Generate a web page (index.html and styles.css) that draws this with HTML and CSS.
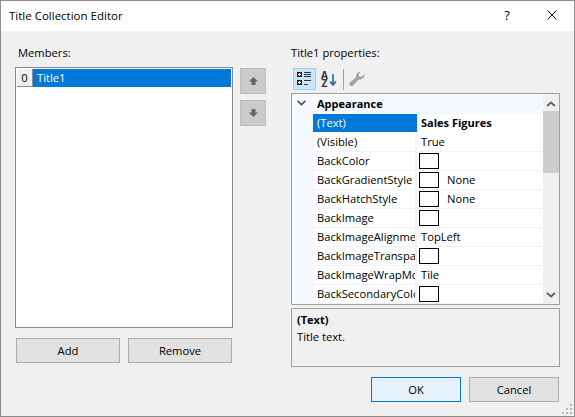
FILE: index.html
```html
<!DOCTYPE html>
<html lang="en">
<head>
<meta charset="utf-8">
<title>Title Collection Editor</title>
<link rel="stylesheet" href="styles.css">
</head>
<body>
<div class="window">
  <header class="titlebar">
    <span class="title">Title Collection Editor</span>
    <span class="help">?</span>
    <svg class="close" width="10" height="10" viewBox="0 0 10 10"><path d="M.5.5l9 9M9.500.5l-9 9" stroke="#111" fill="none"/></svg>
  </header>
  <main class="content">
    <section class="left">
      <div class="label">Members:</div>
      <div class="members-row">
        <div class="listbox">
          <div class="item"><span class="index">0</span><span class="item-text">Title1</span></div>
        </div>
        <div class="movers">
          <button class="mover"><svg width="9" height="8" viewBox="0 0 9 8"><path d="M4.500 0L9 4.500H6.500V8h-4V4.500H0z" fill="#666"/></svg></button>
          <button class="mover"><svg width="9" height="8" viewBox="0 0 9 8"><path d="M4.500 8L0 3.500h2.500V0h4v3.500H9z" fill="#666"/></svg></button>
        </div>
      </div>
      <div class="list-buttons">
        <button class="btn wide">Add</button>
        <button class="btn wide">Remove</button>
      </div>
    </section>
    <section class="right">
      <div class="label">Title1 properties:</div>
      <div class="toolbar">
        <span class="tool active">
          <svg width="15" height="14" viewBox="0 0 15 14">
            <path d="M0 0h5v5H0zM0 8h5v5H0z" fill="#222"/>
            <path d="M1 2.500h3M2.500 1v3M1 10.500h3M2.500 9v3" stroke="#fff"/>
            <path d="M7 .5h7M7 2.500h7M7 4.500h7M7 8.500h7M7 12.500h4" stroke="#333"/>
          </svg>
        </span>
        <span class="tool">
          <svg width="16" height="16" viewBox="0 0 16 16">
            <text class="az" x="0" y="8">A</text>
            <text class="az" x="0.500" y="16">Z</text>
            <path d="M12 3v11M9 10.500l3 3.500 3-3.500" stroke="#1a6fa8" stroke-width="1.600" fill="none"/>
          </svg>
        </span>
        <span class="tool-sep"></span>
        <span class="tool last">
          <svg width="16" height="16" viewBox="0 0 16 16"><path d="M15.500 3.500a4.700 4.700 0 0 1-6 5L4 14.500a2 2 0 0 1-3-3L7 6.300A4.700 4.700 0 0 1 12 .6L9.500 3.200l.6 2.200 2.300.6L15 3.300z" fill="#a3a3a3"/></svg>
        </span>
      </div>
      <div class="grid">
        <div class="grid-main">
          <div class="cat-row">
            <svg class="chev" width="9" height="6" viewBox="0 0 9 6"><path d="M.6.7L4.500 4.600 8.400.7" stroke="#444" stroke-width="1.500" fill="none"/></svg>
            <span class="cat-name">Appearance</span>
          </div>
          <div class="row selected"><span class="name">(Text)</span><span class="value strong">Sales Figures</span></div>
          <div class="row"><span class="name">(Visible)</span><span class="value">True</span></div>
          <div class="row"><span class="name">BackColor</span><span class="value"><i class="swatch"></i></span></div>
          <div class="row"><span class="name">BackGradientStyle</span><span class="value"><i class="swatch"></i><span class="after">None</span></span></div>
          <div class="row"><span class="name">BackHatchStyle</span><span class="value"><i class="swatch"></i><span class="after">None</span></span></div>
          <div class="row"><span class="name">BackImage</span><span class="value"><i class="swatch"></i></span></div>
          <div class="row"><span class="name">BackImageAlignment</span><span class="value">TopLeft</span></div>
          <div class="row"><span class="name">BackImageTransparentColor</span><span class="value"><i class="swatch"></i></span></div>
          <div class="row"><span class="name">BackImageWrapMode</span><span class="value">Tile</span></div>
          <div class="row"><span class="name">BackSecondaryColor</span><span class="value"><i class="swatch"></i></span></div>
        </div>
        <div class="scrollbar">
          <svg class="arrow" width="10" height="6" viewBox="0 0 10 6"><path d="M1 5l4-3.500L9 5" stroke="#666" stroke-width="2" fill="none"/></svg>
          <div class="thumb"></div>
          <svg class="arrow bottom" width="10" height="6" viewBox="0 0 10 6"><path d="M1 1l4 3.500L9 1" stroke="#666" stroke-width="2" fill="none"/></svg>
        </div>
      </div>
      <div class="desc">
        <div class="desc-title">(Text)</div>
        <div class="desc-text">Title text.</div>
      </div>
      <div class="actions">
        <button class="btn dialog default">OK</button>
        <button class="btn dialog">Cancel</button>
      </div>
    </section>
  </main>
  <svg class="grip" width="12" height="12" viewBox="0 0 12 12"><path d="M9 1h2v2H9zM5 5h2v2H5zM9 5h2v2H9zM1 9h2v2H1zM5 9h2v2H5zM9 9h2v2H9z" fill="#b5b5b5"/></svg>
</div>
</body>
</html>
```
FILE: styles.css
```css
* { box-sizing: border-box; }
html, body { margin: 0; padding: 0; }
body { width: 575px; height: 417px; overflow: hidden; font-family: "Open Sans", "Noto Sans", sans-serif; font-size: 11.2px; color: #000; }
.window { position: relative; width: 575px; height: 417px; border: 1px solid #8c8c8c; background: #f0f0f0; display: flex; flex-direction: column; }
.titlebar { height: 30px; flex: none; background: #fff; display: flex; align-items: center; padding: 0 0 2px 8px; }
.title { flex: 1; font-size: 11.5px; }
.help { width: 14px; font-size: 13px; margin-right: 33px; text-align: center; }
.close { margin-right: 17px; }
.content { flex: 1; display: flex; padding: 14px 14px 0 14px; }
.left { width: 252px; flex: none; margin-right: 24px; }
.right { width: 269px; flex: none; }
.label { height: 22px; padding: 0 0 0 3px; line-height: 16px; }
.right .label { padding-left: 0; }
.members-row { display: flex; }
.listbox { width: 218px; height: 261px; background: #fff; border: 1px solid #828790; padding: 1px; }
.item { height: 18px; display: flex; background: #0078d7; color: #fff; }
.index { width: 16px; background: #f0f0f0; color: #000; border-right: 1px solid #8c8c8c; border-bottom: 1px solid #8c8c8c; text-align: center; line-height: 17px; }
.item-text { padding-left: 4px; line-height: 17px; }
.movers { margin-left: 7px; display: flex; flex-direction: column; gap: 6px; padding-top: 1px; }
.mover { width: 26px; height: 26px; padding: 0; background: #cacaca; border: 1px solid #bdbdbd; display: flex; align-items: center; justify-content: center; }
button { font: inherit; color: #000; }
.btn { background: #e1e1e1; border: 1px solid #adadad; padding: 0; }
.dialog { padding-bottom: 1px; }
.list-buttons { display: flex; gap: 8px; margin-top: 10px; padding-left: 1px; }
.wide { width: 104px; height: 25px; }
.toolbar { height: 24px; display: flex; align-items: center; padding-left: 2px; gap: 1px; }
.tool { width: 23px; height: 22px; display: flex; align-items: center; justify-content: center; }
.tool.last { width: 20px; }
.tool.active { background: #cce4f7; border: 1px solid #99d1ff; }
.tool-sep { width: 1px; height: 21px; background: #a0a0a0; margin: 0 2px; }
.az { font-family: "Open Sans", sans-serif; font-size: 10px; font-weight: 700; fill: #333; }
.grid { height: 212px; margin-top: 2px; border: 1px solid #a0a0a0; background: #f5f8fd; display: flex; }
.grid-main { width: 251px; flex: none; padding-left: 21px; }
.cat-row { height: 20px; margin-left: -21px; padding-bottom: 2px; display: flex; align-items: center; font-weight: 700; font-size: 11px; }
.chev { margin-left: 5px; }
.cat-name { margin-left: 11px; }
.row { height: 19px; display: flex; background: #fff; border-bottom: 1px solid #f0f3f9; line-height: 18px; }
.name { width: 104px; flex: none; overflow: hidden; white-space: nowrap; padding-left: 4px; border-right: 2px solid #f0f3f9; }
.value { flex: 1; min-width: 0; padding-left: 4px; display: flex; align-items: center; white-space: nowrap; }
.selected { border-bottom-color: #fff; }
.selected .name { background: #0078d7; color: #fff; border-right-color: #0078d7; }
.strong { font-weight: 700; font-size: 11px; }
.swatch { width: 20px; height: 16px; border: 1px solid #000; background: #fff; margin-left: -2px; display: block; }
.after { margin-left: 8px; }
.scrollbar { flex: 1; background: #f0f0f0; display: flex; flex-direction: column; align-items: center; padding-top: 7px; }
.thumb { width: 100%; height: 62px; margin-top: 4px; flex: none; background: #cdcdcd; }
.bottom { margin-top: auto; margin-bottom: 6px; }
.desc { height: 59px; margin-top: 3px; border: 1px solid #a0a0a0; padding: 2px 5px; line-height: 17px; }
.desc-title { font-weight: 700; font-size: 11px; }
.actions { display: flex; justify-content: flex-end; gap: 8px; margin-top: 10px; padding-right: 1px; }
.dialog { width: 90px; height: 25px; }
.default { background: #e5f1fb; border: 1px solid #0078d7; }
.grip { position: absolute; right: 1px; bottom: 1px; }
```
